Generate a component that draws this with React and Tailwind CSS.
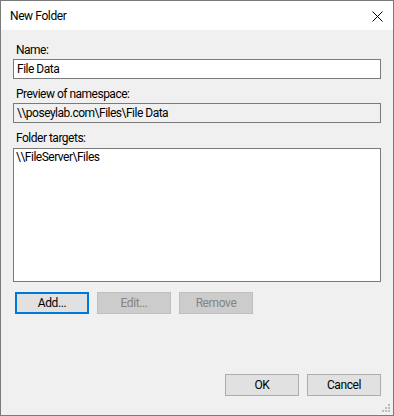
import React from "react";

const font = { fontFamily: 'Roboto, "Liberation Sans", Arial, sans-serif' };

const Btn = ({ children, focused, disabled }) => (
  <button
    className={
      focused
        ? "w-[74px] h-[22px] bg-[#e1e1e1] border-2 border-[#0078d7] text-[12px] tracking-[-0.4px] text-black leading-none"
        : disabled
        ? "w-[74px] h-[22px] bg-[#cccccc] border border-[#bfbfbf] text-[12px] tracking-[-0.4px] text-[#838383] leading-none"
        : "w-[74px] h-[22px] bg-[#e1e1e1] border border-[#adadad] text-[12px] tracking-[-0.4px] text-black leading-none"
    }
  >
    {children}
  </button>
);

export default function App() {
  return (
    <div
      className="relative w-[394px] h-[416px] border border-[#7a7a7a] bg-[#f0f0f0] flex flex-col"
      style={font}
    >
      {/* Title bar */}
      <div className="h-[29px] bg-white flex items-center justify-between pl-[9px] pr-[10px]">
        <span className="text-[12px] tracking-[-0.4px] text-black">New Folder</span>
        <svg width="11" height="11" viewBox="0 0 11 11" className="mt-[1px]">
          <path d="M0.5 0.5 L10.5 10.5 M10.5 0.5 L0.5 10.5" stroke="#000" strokeWidth="1" />
        </svg>
      </div>

      {/* Body */}
      <div className="flex-1 flex flex-col px-[12px] pt-[13px] text-[12px] tracking-[-0.5px] text-black">
        <div className="leading-[15px] pl-[3px]">Name:</div>
        <div className="mt-[1px] h-[20px] bg-white border border-[#7a7a7a] flex items-center px-[3px]">
          File Data
        </div>

        <div className="mt-[8px] leading-[15px] pl-[3px]">Preview of namespace:</div>
        <div className="mt-[1px] h-[20px] bg-[#f0f0f0] border border-[#7a7a7a] flex items-center px-[3px]">
          \\poseylab.com\Files\File Data
        </div>

        <div className="mt-[8px] leading-[15px] pl-[3px]">Folder targets:</div>
        <div className="mt-[2px] h-[134px] bg-white border border-[#7a7a7a] px-[2px] pt-[1px]">
          <div className="leading-[15px]">\\FileServer\Files</div>
        </div>

        <div className="mt-[10px] pl-[2px] flex gap-[8px]">
          <Btn focused>Add...</Btn>
          <Btn disabled>Edit...</Btn>
          <Btn disabled>Remove</Btn>
        </div>

        <div className="mt-[60px] flex justify-end gap-[8px]">
          <Btn>OK</Btn>
          <Btn>Cancel</Btn>
        </div>
      </div>

      {/* Size grip */}
      <svg width="10" height="10" viewBox="0 0 10 10" className="absolute right-[2px] bottom-[2px]">
        <rect x="7" y="1" width="2" height="2" fill="#bcbcbc" />
        <rect x="4" y="4" width="2" height="2" fill="#bcbcbc" />
        <rect x="7" y="4" width="2" height="2" fill="#bcbcbc" />
        <rect x="1" y="7" width="2" height="2" fill="#bcbcbc" />
        <rect x="4" y="7" width="2" height="2" fill="#bcbcbc" />
        <rect x="7" y="7" width="2" height="2" fill="#bcbcbc" />
      </svg>
    </div>
  );
}
